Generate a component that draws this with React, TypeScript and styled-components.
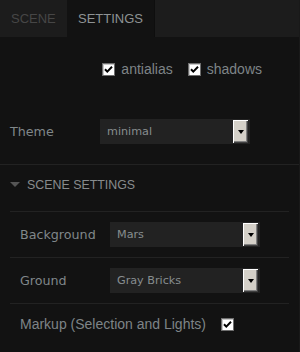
import React from "react";
import styled, { createGlobalStyle } from "styled-components";

const Global = createGlobalStyle`
  html, body { margin: 0; padding: 0; background: #121212; }
  body { width: 300px; height: 352px; overflow: hidden; }
`;

const Panel = styled.div`
  width: 300px;
  height: 352px;
  box-sizing: border-box;
  background: #121212;
  border-right: 1px solid #191919;
  font-family: "Liberation Sans", Arial, sans-serif;
`;

const TabBar = styled.div`
  display: flex;
  height: 37px;
  background: #1c1c1c;
`;

const Tab = styled.div<{ $active?: boolean }>`
  display: flex;
  align-items: center;
  padding: 0 11px;
  font-size: 13px;
  color: ${(p) => (p.$active ? "#8e9294" : "#464646")};
  background: ${(p) => (p.$active ? "#121212" : "transparent")};
  border-right: ${(p) => (p.$active ? "1px solid #0e0e0e" : "none")};
  width: ${(p) => (p.$active ? "88px" : "67px")};
  box-sizing: border-box;
`;

const OptionsRow = styled.div`
  display: flex;
  justify-content: flex-end;
  align-items: center;
  height: 26px;
  margin-top: 19px;
  padding-right: 37px;
  gap: 15px;
`;

const CheckLabel = styled.label`
  display: flex;
  align-items: center;
  gap: 6px;
  font-size: 14px;
  color: #7e8487;
`;

const Box = styled.span`
  display: inline-flex;
  align-items: center;
  justify-content: center;
  width: 13px;
  height: 13px;
  box-sizing: border-box;
  background: #fff;
  border: 1px solid #6e6e6e;
  box-shadow: inset 1px 1px 0 #c8c8c8;
`;

const Check = () => (
  <Box>
    <svg width="9" height="9" viewBox="0 0 9 9">
      <path d="M1 4.2 L3.3 6.6 L8 1.8" fill="none" stroke="#000" strokeWidth="2" />
    </svg>
  </Box>
);

const FieldRow = styled.div<{ $indent?: number }>`
  display: flex;
  align-items: center;
  padding-left: ${(p) => p.$indent ?? 10}px;
`;

const ThemeRow = styled(FieldRow)`
  margin-top: 37px;
  height: 25px;
`;

const Label = styled.span`
  width: 90px;
  flex: none;
  font-family: "DejaVu Sans", Verdana, sans-serif;
  font-size: 12.7px;
  color: #80878a;
`;

const Dropdown = styled.div`
  display: flex;
  align-items: center;
  justify-content: space-between;
  width: 150px;
  height: 25px;
  box-sizing: border-box;
  background: #222222;
  padding: 1px 2px 1px 7px;
`;

const DropText = styled.span`
  font-family: "DejaVu Sans", Verdana, sans-serif;
  font-size: 11.2px;
  color: #878d8f;
`;

const DropButton = styled.span`
  display: flex;
  align-items: center;
  justify-content: center;
  width: 15px;
  height: 23px;
  box-sizing: border-box;
  background: #d4d0c8;
  box-shadow: inset 1px 1px 0 #ffffff, inset -1px -1px 0 #404040, inset -2px -2px 0 #808080;
`;

const Arrow = styled.span`
  width: 0;
  height: 0;
  border-left: 3.5px solid transparent;
  border-right: 3.5px solid transparent;
  border-top: 4px solid #000;
  margin-top: 1px;
`;

const Select = ({ value }: { value: string }) => (
  <Dropdown>
    <DropText>{value}</DropText>
    <DropButton>
      <Arrow />
    </DropButton>
  </Dropdown>
);

const Divider = styled.div`
  height: 1px;
  background: #222222;
  margin-top: 20px;
`;

const SectionHeader = styled.div`
  display: flex;
  align-items: center;
  gap: 7px;
  height: 16px;
  padding: 12px 0 18px 10px;
  font-size: 12.4px;
  color: #878b8d;
`;

const Triangle = styled.span`
  width: 0;
  height: 0;
  border-left: 5.5px solid transparent;
  border-right: 5.5px solid transparent;
  border-top: 5px solid #555;
  margin-top: -2px;
`;

const Section = styled.div`
  margin: 0 10px;
  border-top: 1px solid #222222;
`;

const SectionRow = styled(FieldRow)`
  height: 45px;
  border-bottom: 1px solid #222222;
`;

const LastRow = styled(FieldRow)`
  height: 40px;
  gap: 15px;
`;

const PlainText = styled.span`
  font-size: 14px;
  color: #7e8487;
`;

export default function App() {
  return (
    <>
      <Global />
      <Panel>
        <TabBar>
          <Tab>SCENE</Tab>
          <Tab $active>SETTINGS</Tab>
        </TabBar>
        <OptionsRow>
          <CheckLabel>
            <Check />
            antialias
          </CheckLabel>
          <CheckLabel>
            <Check />
            shadows
          </CheckLabel>
        </OptionsRow>
        <ThemeRow>
          <Label>Theme</Label>
          <Select value="minimal" />
        </ThemeRow>
        <Divider />
        <SectionHeader>
          <Triangle />
          SCENE SETTINGS
        </SectionHeader>
        <Section>
          <SectionRow>
            <Label>Background</Label>
            <Select value="Mars" />
          </SectionRow>
          <SectionRow>
            <Label>Ground</Label>
            <Select value="Gray Bricks" />
          </SectionRow>
          <LastRow>
            <PlainText>Markup (Selection and Lights)</PlainText>
            <Check />
          </LastRow>
        </Section>
      </Panel>
    </>
  );
}
